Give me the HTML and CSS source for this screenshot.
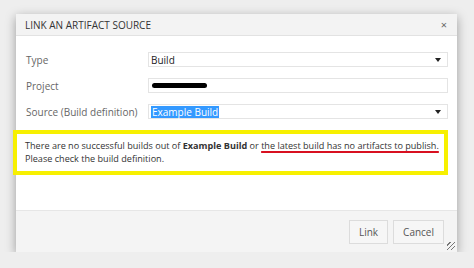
FILE: index.html
```html
<!DOCTYPE html>
<html lang="en">
<head>
    <meta charset="UTF-8">
    <meta name="viewport" content="width=device-width, initial-scale=1.0">
    <title>Link an artifact source</title>
    <link rel="stylesheet" href="styles.css">
</head>
<body>

    <div class="dialog">
        <div class="dialog-header">
            <span class="dialog-title">LINK AN ARTIFACT SOURCE</span>
            <span class="close">&#215;</span>
        </div>

        <div class="dialog-body">
            <div class="row">
                <label class="label">Type</label>
                <div class="field">
                    <span>Build</span>
                    <span class="caret"></span>
                </div>
            </div>
            <div class="row">
                <label class="label">Project</label>
                <div class="field">
                    <span class="redacted"></span>
                </div>
            </div>
            <div class="row">
                <label class="label">Source (Build definition)</label>
                <div class="field">
                    <span class="selected">Example Build</span>
                    <span class="caret"></span>
                </div>
            </div>

            <!-- highlighted warning -->
            <div class="warning">
                <p>There are no successful builds out of <b>Example Build</b> or <span class="marked">the latest build has no artifacts to publish.</span></p>
                <p>Please check the build definition.</p>
            </div>
        </div>

        <div class="dialog-footer">
            <button class="btn">Link</button>
            <button class="btn">Cancel</button>
            <span class="grip"></span>
        </div>
    </div>

</body>
</html>
```

FILE: styles.css
```css
body {
    margin: 0;
    padding: 14px 0 0 16px;
    background: #eeeeee;
    font-family: "Open Sans", "Noto Sans", sans-serif;
    font-size: 10px;
    color: #333;
}

.dialog {
    width: 441px;
    height: 238px;
    display: flex;
    flex-direction: column;
    background: #fff;
    box-shadow: 0 3px 10px rgba(0, 0, 0, 0.35);
}

.dialog-header {
    height: 22px;
    flex: none;
    display: flex;
    align-items: center;
    justify-content: space-between;
    padding: 0 10px 0 9px;
    background: #f3f3f3;
    border-bottom: 1px solid #e2e2e2;
    box-sizing: border-box;
}

.dialog-title {
    font-size: 10px;
    color: #333;
}

.close {
    font-size: 11px;
    color: #666;
}

.dialog-body {
    flex: 1;
    padding: 16px 9px 0 10px;
}

.row {
    display: flex;
    align-items: center;
    height: 15px;
    margin-bottom: 11px;
}

.row:last-of-type {
    margin-bottom: 14px;
}

.label {
    width: 122px;
    color: #666;
}

.field {
    flex: 1;
    height: 15px;
    display: flex;
    align-items: center;
    justify-content: space-between;
    padding: 0 6px 0 2px;
    border: 1px solid #e4e4e4;
    box-sizing: border-box;
    color: #222;
}

.caret {
    width: 0;
    height: 0;
    border-left: 3px solid transparent;
    border-right: 3px solid transparent;
    border-top: 4px solid #222;
}

.selected {
    background: #3399ff;
    color: #fff;
    padding: 0 1px;
    line-height: 12px;
}

.redacted {
    width: 55px;
    height: 5px;
    margin-left: 1px;
    background: #000;
    border-radius: 3px;
}

.warning {
    margin-left: -13px;
    padding: 6px 8px 6px 8px;
    border: 4px solid #f7f000;
    line-height: 12.5px;
    font-size: 9.1px;
    color: #333;
}

.warning p {
    margin: 0;
    white-space: nowrap;
}

.marked {
    text-decoration: underline;
    text-decoration-color: #d81020;
    text-decoration-thickness: 1.5px;
    text-underline-offset: 2px;
}

.dialog-footer {
    height: 42px;
    flex: none;
    position: relative;
    display: flex;
    justify-content: flex-end;
    align-items: flex-start;
    gap: 5px;
    padding: 9px 13px 0 0;
    background: #f4f4f4;
    border-top: 1px solid #e6e6e6;
    box-sizing: border-box;
}

.btn {
    height: 24px;
    padding: 0 9px;
    font-family: inherit;
    font-size: 10px;
    color: #555;
    background: #f6f6f6;
    border: 1px solid #dcdcdc;
}

.grip {
    position: absolute;
    right: 2px;
    bottom: 2px;
    width: 8px;
    height: 8px;
    background: repeating-linear-gradient(135deg, transparent 0 2px, #777 2px 3px);
}
```
